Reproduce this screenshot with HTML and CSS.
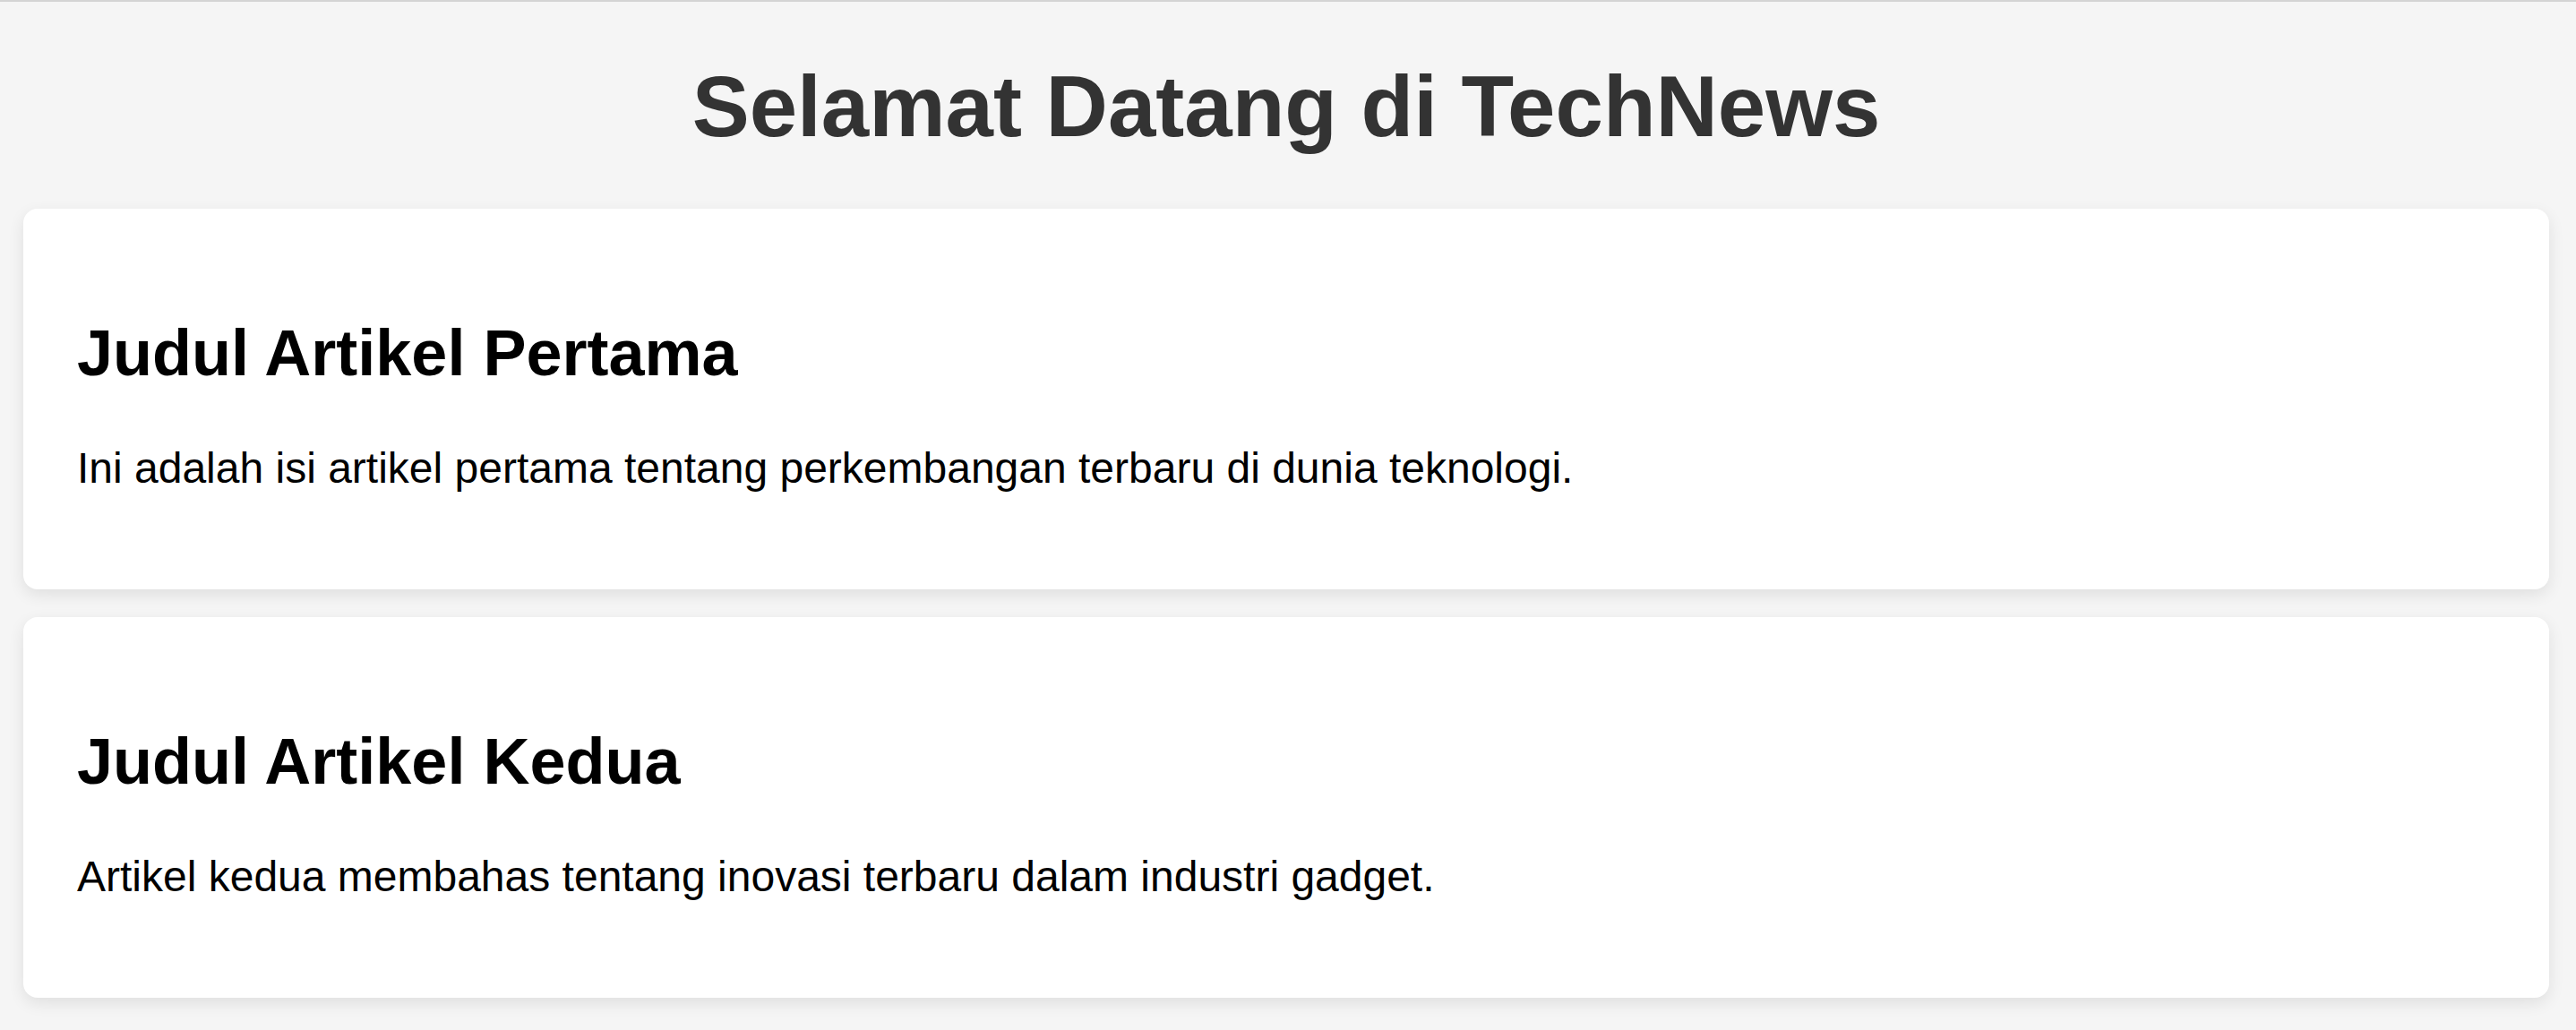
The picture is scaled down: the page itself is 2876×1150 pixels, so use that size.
FILE: index.html
```html
<!DOCTYPE html>
<html lang="id">
<head>
    <meta charset="UTF-8">
    <meta name="viewport" content="width=device-width, initial-scale=1.0">
    <title>TechNews</title>
    <link rel="stylesheet" href="styles.css">
</head>
<body>
    <div class="page">
        <h1 class="site-title">Selamat Datang di TechNews</h1>

        <div class="article">
            <h2>Judul Artikel Pertama</h2>
            <p>Ini adalah isi artikel pertama tentang perkembangan terbaru di dunia teknologi.</p>
        </div>

        <div class="article">
            <h2>Judul Artikel Kedua</h2>
            <p>Artikel kedua membahas tentang inovasi terbaru dalam industri gadget.</p>
        </div>
    </div>
</body>
</html>
```

FILE: styles.css
```css
html {
    border-top: 2px solid #d4d4d4;
}

body {
    font-family: "Liberation Sans", Arial, sans-serif;
    margin: 0;
    padding: 0;
    background-color: #f5f5f5;
}

.page {
    display: flow-root;
    margin: 0 30px 0 26px;
}

.site-title {
    text-align: center;
    color: #333;
    font-size: 96px;
    font-weight: bold;
    margin: 62px 0 59px 0;
}

.article {
    background-color: #fff;
    padding: 0 60px;
    margin-bottom: 31px;
    border-radius: 16px;
    box-shadow: 0 6px 18px rgba(0, 0, 0, 0.09);
    display: flow-root;
}

.article h2 {
    font-size: 72px;
    color: #000;
    margin: 120px 0 60px 0;
}

.article p {
    font-size: 48px;
    color: #000;
    margin: 0 0 108px 0;
}
```
